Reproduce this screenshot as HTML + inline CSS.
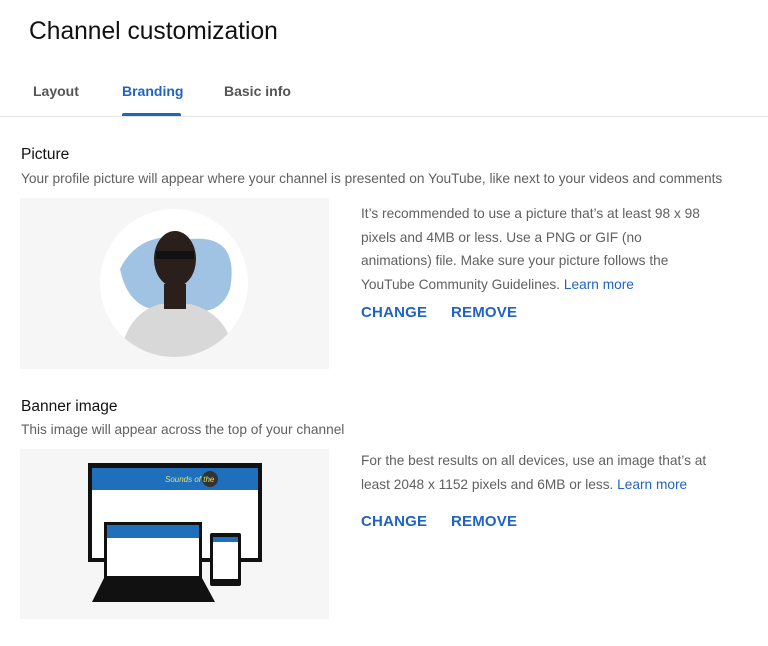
<!DOCTYPE html>
<html><head><style>
body{margin:0;width:768px;height:646px;background:#fff;font-family:"Liberation Sans",sans-serif;position:relative;overflow:hidden}
.a{position:absolute}
.t{font-size:13.7px;color:#606060;line-height:23.5px}
.btn{color:#1f63c4;font-size:15px;font-weight:bold;letter-spacing:0.2px}
a{color:#1f63c4;text-decoration:none}
</style></head><body>
<div class="a" style="left:29px;top:18px;font-size:24.6px;color:#111">Channel customization</div>
<div class="a" style="left:33px;top:83px;font-size:14px;color:#555;font-weight:bold">Layout</div>
<div class="a" style="left:122px;top:83px;font-size:14px;color:#2065c0;font-weight:bold">Branding</div>
<div class="a" style="left:224px;top:83px;font-size:14px;color:#555;font-weight:bold">Basic info</div>
<div class="a" style="left:122px;top:113px;width:59px;height:4px;background:#2065c0;border-radius:2px 2px 0 0"></div>
<div class="a" style="left:0;top:116px;width:768px;height:1px;background:#e5e5e5"></div>

<div class="a" style="left:21px;top:146px;font-size:15.5px;color:#111">Picture</div>
<div class="a t" style="left:21px;top:167px">Your profile picture will appear where your channel is presented on YouTube, like next to your videos and comments</div>
<div class="a" style="left:20px;top:198px;width:309px;height:171px;background:#f6f6f6"></div>
<svg class="a" style="left:100px;top:209px" width="150" height="150" viewBox="0 0 150 150">
<circle cx="74" cy="74" r="74" fill="#fff"/>
<path d="M20 60 Q40 20 90 30 Q140 25 130 80 Q120 110 80 100 Q30 110 20 60Z" fill="#8ab4dc" opacity=".8"/>
<clipPath id="c"><circle cx="74" cy="74" r="74"/></clipPath>
<g clip-path="url(#c)">
<path d="M20 150 Q25 105 60 95 L90 95 Q130 105 135 150Z" fill="#d8d8d8"/>
<rect x="64" y="75" width="22" height="25" fill="#2a1f1a"/>
<ellipse cx="75" cy="50" rx="21" ry="28" fill="#2a1f1a"/>
<rect x="56" y="42" width="38" height="8" fill="#111"/>
</g>
</svg>
<div class="a t" style="left:361px;top:202px;width:355px">It’s recommended to use a picture that’s at least 98 x 98 pixels and 4MB or less. Use a PNG or GIF (no animations) file. Make sure your picture follows the YouTube Community Guidelines. <a>Learn more</a></div>
<div class="a btn" style="left:361px;top:304px">CHANGE</div>
<div class="a btn" style="left:451px;top:304px">REMOVE</div>

<div class="a" style="left:21px;top:398px;font-size:15.5px;color:#111">Banner image</div>
<div class="a t" style="left:21px;top:418px">This image will appear across the top of your channel</div>
<div class="a" style="left:20px;top:449px;width:309px;height:170px;background:#f6f6f6"></div>
<svg class="a" style="left:20px;top:449px" width="309" height="170">
<rect x="68" y="14" width="174" height="99" fill="#111"/>
<rect x="72" y="19" width="166" height="22" fill="#1f6fbd"/>
<rect x="72" y="41" width="166" height="68" fill="#fff"/>
<circle cx="190" cy="30" r="8" fill="#333"/>
<text x="145" y="33" font-size="8" fill="#e0e070" font-style="italic">Sounds of the</text>
<rect x="84" y="73" width="98" height="56" fill="#111"/>
<rect x="87" y="76" width="92" height="13" fill="#1f6fbd"/>
<rect x="87" y="89" width="92" height="38" fill="#fff"/>
<path d="M84 129 L182 129 L195 153 L72 153Z" fill="#111"/>
<rect x="190" y="84" width="31" height="53" rx="2" fill="#111"/>
<rect x="193" y="88" width="25" height="5" fill="#1f6fbd"/>
<rect x="193" y="93" width="25" height="37" fill="#fff"/>
</svg>
<div class="a t" style="left:361px;top:449px;width:355px">For the best results on all devices, use an image that’s at least 2048 x 1152 pixels and 6MB or less. <a>Learn more</a></div>
<div class="a btn" style="left:361px;top:513px">CHANGE</div>
<div class="a btn" style="left:451px;top:513px">REMOVE</div>
</body></html>
